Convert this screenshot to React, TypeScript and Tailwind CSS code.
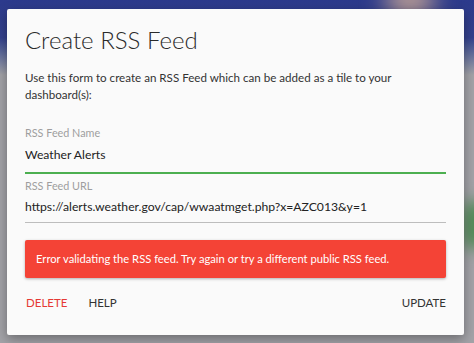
import React from 'react';

const font = { fontFamily: 'Lato, "Open Sans", Arial, sans-serif' };

function Backdrop() {
  return (
    <div className="absolute inset-0 overflow-hidden bg-[#a3a3a8]">
      <div className="absolute left-0 top-0 h-[75px] w-full bg-gradient-to-b from-[#2c3a8c] via-[#34418d] to-[#a3a3a8]" />
      <div className="absolute left-[385px] top-[-20px] h-[40px] w-[50px] rounded-full bg-[#b59a95] blur-md" />
      <div className="absolute left-[462px] top-[200px] h-[50px] w-[30px] rounded-full bg-[#4f8a55] blur-sm" />
    </div>
  );
}

export default function App() {
  return (
    <div className="relative h-[343px] w-[474px] overflow-hidden" style={font}>
      <Backdrop />
      <div className="relative pl-[7px] pt-[9px]">
        <div className="flex h-[326px] w-[457px] flex-col rounded-[2px] bg-[#fafafa] px-[18px] pt-[16px] shadow-[0_4px_12px_rgba(0,0,0,0.35)]">
          <h1 className="text-[24px] font-light leading-[30px] text-[#2a2a2a]">Create RSS Feed</h1>
          <p className="mt-[14px] text-[11.6px] leading-[17px] text-[#333]">
            Use this form to create an RSS Feed which can be added as a tile to your dashboard(s):
          </p>

          <div className="mt-[24px]">
            <label className="block text-[10.8px] leading-[12px] text-[#9e9e9e]">RSS Feed Name</label>
            <div className="mt-[6px] border-b-2 border-[#4caf50] pb-[7px] text-[12.2px] leading-[20px] text-[#222]">
              Weather Alerts
            </div>
          </div>

          <div className="mt-[6px]">
            <label className="block text-[10.8px] leading-[12px] text-[#9e9e9e]">RSS Feed URL</label>
            <div className="mt-[5px] border-b border-[#bdbdbd] pb-[5px] text-[12.2px] leading-[20px] text-[#222]">
              https://alerts.weather.gov/cap/wwaatmget.php?x=AZC013&amp;y=1
            </div>
          </div>

          <div className="mt-[17px] flex h-[38px] items-center rounded-[2px] bg-[#f44336] px-[11px] text-[11.2px] text-white shadow-[0_1px_3px_rgba(0,0,0,0.3)]">
            Error validating the RSS feed. Try again or try a different public RSS feed.
          </div>

          <div className="mt-[17px] flex items-center text-[11.5px] leading-[16px]">
            <button className="ml-[1px] text-[#e53935]">DELETE</button>
            <button className="ml-[21px] text-[#333]">HELP</button>
            <button className="ml-auto text-[#333]">UPDATE</button>
          </div>
        </div>
      </div>
    </div>
  );
}
